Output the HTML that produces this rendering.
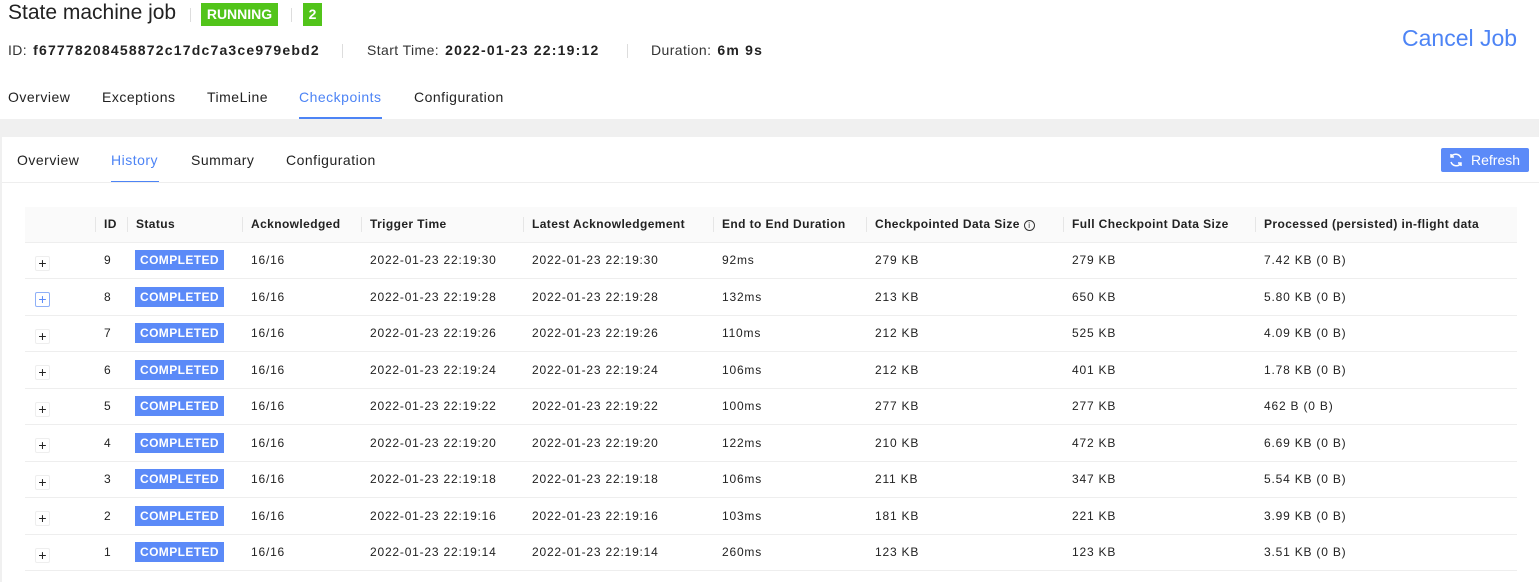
<!DOCTYPE html>
<html><head><style>
*{box-sizing:border-box;margin:0;padding:0}
body{width:1539px;height:582px;overflow:hidden;background:#fff;font-family:"Liberation Sans",Arial,sans-serif;color:#222;font-size:13px;position:relative}
.a{position:absolute;white-space:nowrap}
.title{left:8px;top:1px;font-size:21px;color:#222}
.sep{width:1px;height:14px;background:#ddd}
.gb{background:#52c41a;color:#fff;font-weight:bold;font-size:14px;text-align:center;line-height:23px;height:23px;top:3px}
.meta{top:42px;font-size:14px;color:#333;letter-spacing:0.4px}
.meta b{color:#222;margin-left:6px;letter-spacing:1.2px}
.tab{top:89px;font-size:14px;color:#222;letter-spacing:0.5px}
.band{left:0;top:119px;width:1539px;height:18px;background:#f0f0f0}
.stab{top:152px;font-size:14px;color:#222;letter-spacing:0.5px}
.blue{color:#4d84f5}
th,td{text-align:left;font-size:12px;white-space:nowrap;padding-left:9px}
td{letter-spacing:0.8px}
th{letter-spacing:0.4px}
table{position:absolute;left:25px;top:207px;width:1492px;border-collapse:collapse}
th{background:#fafafa;height:35px;font-weight:bold;color:#222;position:relative;border-bottom:1px solid #eee}
th+th:before{content:"";position:absolute;left:0;top:10px;height:15px;width:1px;background:#e6e6e6}
td{height:36.5px;border-bottom:1px solid #eee;color:#222}
.b{display:inline-block;background:#5b8af8;color:#fff;font-weight:bold;font-size:12px;padding:0 5px;line-height:20px;height:20px;letter-spacing:0.4px;margin-left:-1px}
.pl{display:inline-block;width:15px;height:15px;border:1px solid #eee;border-radius:2px;text-align:center;line-height:13px;font-size:14px;margin-left:1px;margin-top:6px;letter-spacing:0}
</style></head><body>
<div class="a title">State machine job</div>
<div class="a sep" style="left:190px;top:8px"></div>
<div class="a gb" style="left:201px;width:77px">RUNNING</div>
<div class="a sep" style="left:291px;top:8px"></div>
<div class="a gb" style="left:303px;width:19px">2</div>
<div class="a meta" style="left:8px">ID:<b>f67778208458872c17dc7a3ce979ebd2</b></div>
<div class="a sep" style="left:342px;top:44px"></div>
<div class="a meta" style="left:367px">Start Time:<b>2022-01-23 22:19:12</b></div>
<div class="a sep" style="left:627px;top:44px"></div>
<div class="a meta" style="left:651px">Duration:<b>6m 9s</b></div>
<div class="a" style="left:1402px;top:25px;font-size:23px;color:#4d84f5">Cancel Job</div>
<div class="a tab" style="left:8px">Overview</div>
<div class="a tab" style="left:102px">Exceptions</div>
<div class="a tab" style="left:207px">TimeLine</div>
<div class="a tab blue" style="left:299px">Checkpoints</div>
<div class="a" style="left:299px;top:117px;width:83px;height:2px;background:#4d84f5"></div>
<div class="a tab" style="left:414px">Configuration</div>
<div class="a band"></div>
<div class="a" style="left:0;top:137px;width:2px;height:445px;background:#f0f0f0"></div>
<div class="a stab" style="left:17px">Overview</div>
<div class="a stab blue" style="left:111px">History</div>
<div class="a" style="left:111px;top:181px;width:48px;height:2px;background:#4d84f5"></div>
<div class="a stab" style="left:191px">Summary</div>
<div class="a stab" style="left:286px">Configuration</div>
<div class="a" style="left:2px;top:182px;width:1537px;height:1px;background:#eee"></div>
<div class="a" style="left:1441px;top:148px;width:88px;height:24px;background:#5b8af8;border-radius:2px;color:#fff;font-size:14px;line-height:24px;padding-left:30px">Refresh</div>
<svg class="a" style="left:1448px;top:152px" width="16" height="16" viewBox="0 0 16 16" fill="none" stroke="#fff" stroke-width="1.5"><path d="M13 6A5.5 5.5 0 0 0 3 5M3 10a5.5 5.5 0 0 0 10 1"/><path d="M3 2v3h3M13 14v-3h-3"/></svg>
<table>
<tr><th style="width:70px"></th><th style="width:32px">ID</th><th style="width:115px">Status</th><th style="width:119px">Acknowledged</th><th style="width:162px">Trigger Time</th><th style="width:190px">Latest Acknowledgement</th><th style="width:153px">End to End Duration</th><th style="width:197px">Checkpointed Data Size <span style="font-weight:normal;border:1px solid #333;border-radius:50%;font-size:8px;display:inline-block;width:11px;height:11px;text-align:center;line-height:10px;letter-spacing:0">i</span></th><th style="width:192px">Full Checkpoint Data Size</th><th>Processed (persisted) in-flight data</th></tr>
<tr><td><span class="pl">+</span></td><td>9</td><td><span class="b">COMPLETED</span></td><td>16/16</td><td>2022-01-23 22:19:30</td><td>2022-01-23 22:19:30</td><td>92ms</td><td>279 KB</td><td>279 KB</td><td>7.42 KB (0 B)</td></tr>
<tr><td><span class="pl" style="border-color:#8fb0f7;color:#5b8af8">+</span></td><td>8</td><td><span class="b">COMPLETED</span></td><td>16/16</td><td>2022-01-23 22:19:28</td><td>2022-01-23 22:19:28</td><td>132ms</td><td>213 KB</td><td>650 KB</td><td>5.80 KB (0 B)</td></tr>
<tr><td><span class="pl">+</span></td><td>7</td><td><span class="b">COMPLETED</span></td><td>16/16</td><td>2022-01-23 22:19:26</td><td>2022-01-23 22:19:26</td><td>110ms</td><td>212 KB</td><td>525 KB</td><td>4.09 KB (0 B)</td></tr>
<tr><td><span class="pl">+</span></td><td>6</td><td><span class="b">COMPLETED</span></td><td>16/16</td><td>2022-01-23 22:19:24</td><td>2022-01-23 22:19:24</td><td>106ms</td><td>212 KB</td><td>401 KB</td><td>1.78 KB (0 B)</td></tr>
<tr><td><span class="pl">+</span></td><td>5</td><td><span class="b">COMPLETED</span></td><td>16/16</td><td>2022-01-23 22:19:22</td><td>2022-01-23 22:19:22</td><td>100ms</td><td>277 KB</td><td>277 KB</td><td>462 B (0 B)</td></tr>
<tr><td><span class="pl">+</span></td><td>4</td><td><span class="b">COMPLETED</span></td><td>16/16</td><td>2022-01-23 22:19:20</td><td>2022-01-23 22:19:20</td><td>122ms</td><td>210 KB</td><td>472 KB</td><td>6.69 KB (0 B)</td></tr>
<tr><td><span class="pl">+</span></td><td>3</td><td><span class="b">COMPLETED</span></td><td>16/16</td><td>2022-01-23 22:19:18</td><td>2022-01-23 22:19:18</td><td>106ms</td><td>211 KB</td><td>347 KB</td><td>5.54 KB (0 B)</td></tr>
<tr><td><span class="pl">+</span></td><td>2</td><td><span class="b">COMPLETED</span></td><td>16/16</td><td>2022-01-23 22:19:16</td><td>2022-01-23 22:19:16</td><td>103ms</td><td>181 KB</td><td>221 KB</td><td>3.99 KB (0 B)</td></tr>
<tr><td><span class="pl">+</span></td><td>1</td><td><span class="b">COMPLETED</span></td><td>16/16</td><td>2022-01-23 22:19:14</td><td>2022-01-23 22:19:14</td><td>260ms</td><td>123 KB</td><td>123 KB</td><td>3.51 KB (0 B)</td></tr>
</table>
</body></html>
